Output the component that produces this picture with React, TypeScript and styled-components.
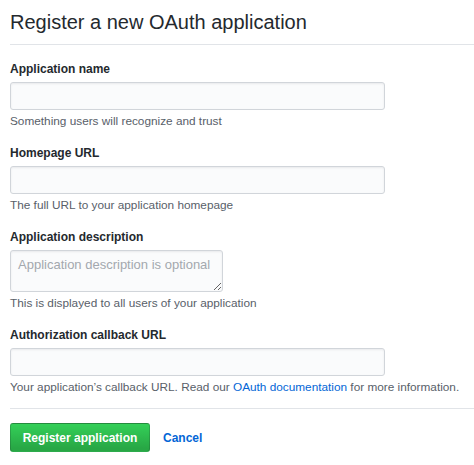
import React from "react";
import styled, { createGlobalStyle } from "styled-components";

const GlobalStyle = createGlobalStyle`
  body {
    margin: 0;
    background: #ffffff;
    font-family: "Liberation Sans", Arial, Helvetica, sans-serif;
    color: #24292e;
  }
`;

interface FieldProps {
  label: string;
  children: React.ReactNode;
  note: React.ReactNode;
}

function Field({ label, children, note }: FieldProps) {
  return (
    <FieldGroup>
      <Label>{label}</Label>
      {children}
      <Note>{note}</Note>
    </FieldGroup>
  );
}

function App() {
  return (
    <>
      <GlobalStyle />
      <Page>
        <Header>
          <Title>Register a new OAuth application</Title>
        </Header>
        <Form onSubmit={(e) => e.preventDefault()}>
          <Field label="Application name" note="Something users will recognize and trust">
            <TextInput type="text" />
          </Field>
          <Field label="Homepage URL" note="The full URL to your application homepage">
            <TextInput type="text" />
          </Field>
          <Field
            label="Application description"
            note="This is displayed to all users of your application"
          >
            <TextArea placeholder="Application description is optional" />
          </Field>
          <Field
            label="Authorization callback URL"
            note={
              <>
                Your application’s callback URL. Read our{" "}
                <Link href="#">OAuth documentation</Link> for more information.
              </>
            }
          >
            <TextInput type="text" />
          </Field>
          <Actions>
            <SubmitButton type="submit">Register application</SubmitButton>
            <CancelLink href="#">Cancel</CancelLink>
          </Actions>
        </Form>
      </Page>
    </>
  );
}

export default App;

const Page = styled.div`
  padding: 10px 0 0 10px;
  overflow: hidden;
`;

const Header = styled.div`
  padding-bottom: 10px;
  border-bottom: 1px solid #e1e4e8;
  margin-bottom: 15px;
`;

const Title = styled.h1`
  margin: 0;
  font-size: 20px;
  line-height: 24px;
  font-weight: 400;
  color: #24292e;
`;

const Form = styled.form`
  display: flex;
  flex-direction: column;
`;

const FieldGroup = styled.div`
  display: flex;
  flex-direction: column;
  align-items: flex-start;
  margin-bottom: 14px;

  &:nth-last-child(2) {
    margin-bottom: 12px;
  }
`;

const Label = styled.label`
  font-size: 12px;
  line-height: 18px;
  font-weight: 700;
  color: #24292e;
  margin-bottom: 4px;
`;

const TextInput = styled.input`
  box-sizing: border-box;
  width: 375px;
  height: 28px;
  padding: 4px 8px;
  font-family: inherit;
  font-size: 13px;
  color: #24292e;
  background-color: #fafbfc;
  border: 1px solid #d1d5da;
  border-radius: 3px;
  box-shadow: inset 0 1px 2px rgba(27, 31, 35, 0.075);
  outline: none;
`;

const TextArea = styled.textarea`
  box-sizing: border-box;
  width: 213px;
  height: 42px;
  padding: 5px 7px;
  font-family: inherit;
  font-size: 13px;
  line-height: 18px;
  color: #24292e;
  background-color: #fafbfc;
  border: 1px solid #d1d5da;
  border-radius: 3px;
  box-shadow: inset 0 1px 2px rgba(27, 31, 35, 0.075);
  outline: none;

  &::placeholder {
    color: #a3a8ae;
  }
`;

const Note = styled.p`
  margin: 2px 0 0;
  font-size: 11.8px;
  line-height: 18px;
  color: #586069;
  white-space: nowrap;
`;

const Link = styled.a`
  color: #0366d6;
  text-decoration: none;
`;

const Actions = styled.div`
  display: flex;
  align-items: center;
  gap: 13px;
  border-top: 1px solid #e1e4e8;
  padding-top: 14px;
`;

const SubmitButton = styled.button`
  box-sizing: border-box;
  width: 140px;
  height: 29px;
  padding: 0 10px;
  font-family: inherit;
  font-size: 12px;
  font-weight: 700;
  color: #ffffff;
  background-image: linear-gradient(-180deg, #34d058 0%, #28a745 90%);
  border: 1px solid rgba(27, 31, 35, 0.2);
  border-radius: 3px;
  cursor: pointer;
`;

const CancelLink = styled.a`
  font-size: 12px;
  font-weight: 700;
  color: #0366d6;
  text-decoration: none;
`;
